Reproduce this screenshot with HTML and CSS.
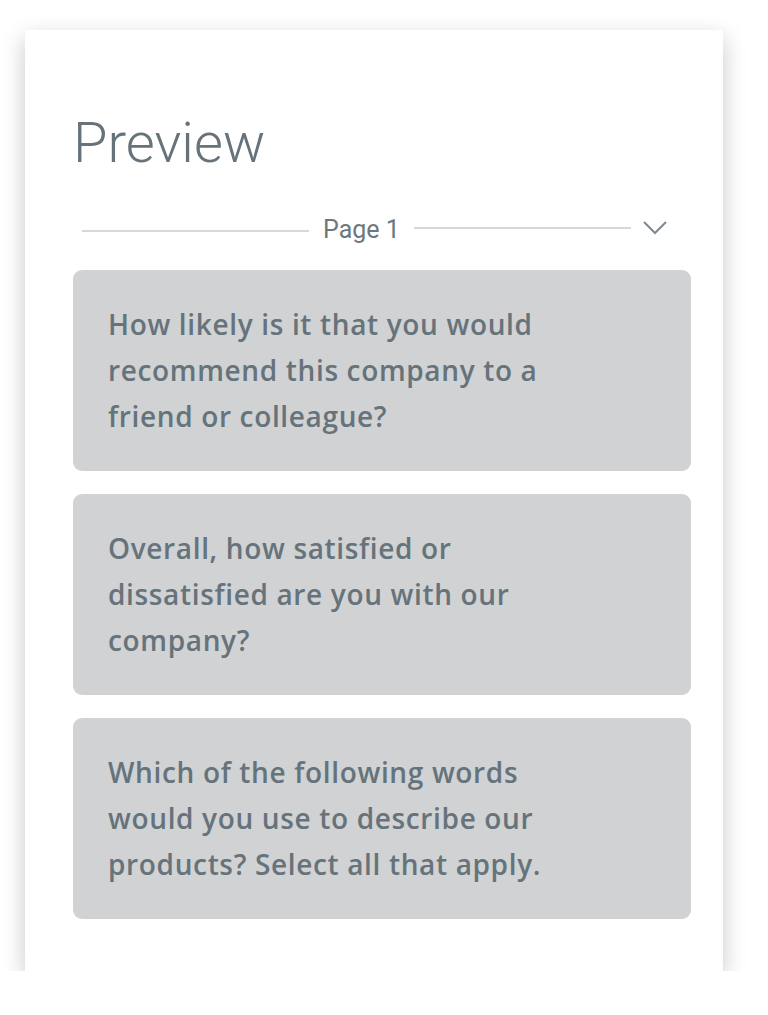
FILE: index.html
```html
<!DOCTYPE html>
<html>
<head>
<meta charset="utf-8">
<link rel="stylesheet" href="styles.css">
</head>
<body>
<div class="card">
  <h1 class="title">Preview</h1>
  <div class="page-row">
    <span class="line line-left"></span>
    <span class="page-label">Page 1</span>
    <span class="line line-right"></span>
    <svg class="chevron" width="24" height="14" viewBox="0 0 24 14"><path d="M1 1 L12 12 L23 1" fill="none" stroke="#7d8990" stroke-width="2"/></svg>
  </div>
  <div class="questions">
    <div class="question">How likely is it that you would recommend this company to a friend or colleague?</div>
    <div class="question">Overall, how satisfied or dissatisfied are you with our company?</div>
    <div class="question">Which of the following words would you use to describe our products? Select all that apply.</div>
  </div>
</div>
</body>
</html>
```

FILE: styles.css
```css
html, body {
  margin: 0;
  padding: 0;
  background: #ffffff;
}
body {
  font-family: Roboto, "Liberation Sans", sans-serif;
}
.card {
  margin: 30px 0 0 25px;
  width: 698px;
  height: 941px;
  background: #ffffff;
  box-shadow: 0 8px 22px rgba(0, 0, 0, 0.22);
  box-sizing: border-box;
  padding: 0 32px 0 48px;
}
.title {
  margin: 0;
  padding-top: 81px;
  font-size: 56px;
  font-weight: 300;
  line-height: 64px;
  color: #66737b;
}
.page-row {
  display: flex;
  align-items: center;
  margin-top: 36px;
  height: 36px;
  padding-left: 9px;
}
.line {
  height: 2px;
  background: #d6d9db;
}
.line-left {
  width: 227px;
  margin-top: 4px;
}
.line-right {
  width: 217px;
  margin-top: -2px;
}
.page-label {
  font-size: 25px;
  font-weight: 400;
  color: #6b7880;
  margin: 0 14px;
}
.chevron {
  margin-left: 12px;
  margin-top: -2px;
}
.questions {
  margin-top: 23px;
  display: flex;
  flex-direction: column;
  gap: 23px;
}
.question {
  height: 201px;
  box-sizing: border-box;
  background: #d0d2d4;
  border-radius: 9px;
  padding: 31px 113px 0 35px;
  font-family: "Open Sans", Roboto, sans-serif;
  font-size: 28px;
  font-weight: 600;
  letter-spacing: 0.65px;
  line-height: 46px;
  color: #66737b;
}
```
